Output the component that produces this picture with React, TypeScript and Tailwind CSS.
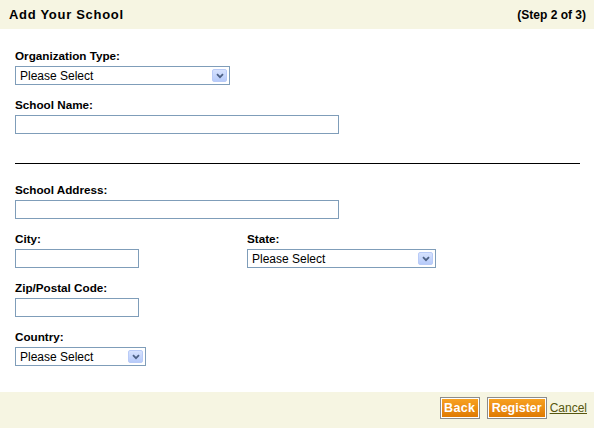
import React from "react";

function Arrow() {
  return (
    <span className="absolute right-[2px] top-[2px] bottom-[2px] w-[15px] rounded-[2px] border border-[#b9cbf7] bg-linear-to-b from-[#d6e2fe] to-[#b7cbfa] flex items-center justify-center">
      <svg width="8" height="6" viewBox="0 0 8 6">
        <path d="M1 1.2 L4 4.2 L7 1.2" fill="none" stroke="#4d6185" strokeWidth="1.8" />
      </svg>
    </span>
  );
}

function Select({ w }: { w: string }) {
  return (
    <div className={`relative h-[19px] border border-[#7f9db9] bg-white ${w}`}>
      <span className="block pl-[4px] text-[12px] leading-[18px]">Please Select</span>
      <Arrow />
    </div>
  );
}

function Input({ w }: { w: string }) {
  return <div className={`h-[19px] border border-[#7f9db9] bg-white ${w}`} />;
}

function Label({ children }: { children: React.ReactNode }) {
  return <div className="text-[11.7px] font-bold leading-[14px] mb-[3px]">{children}</div>;
}

export default function App() {
  return (
    <div className="w-[594px] h-[428px] bg-white flex flex-col font-['Liberation_Sans',Arial,sans-serif] text-black">
      <div className="h-[29px] bg-[#f6f5e2] flex items-center justify-between pl-[9px] pr-[8px]">
        <span className="text-[13px] font-bold tracking-[0.7px]">Add Your School</span>
        <span className="text-[12px] font-bold">(Step 2 of 3)</span>
      </div>
      <div className="flex-1 pl-[15px] pr-[14px] pt-[20px]">
        <Label>Organization Type:</Label>
        <Select w="w-[215px]" />
        <div className="mt-[13px]">
          <Label>School Name:</Label>
          <Input w="w-[324px]" />
        </div>
        <div className="mt-[29px] border-t border-black" />
        <div className="mt-[19px]">
          <Label>School Address:</Label>
          <Input w="w-[324px]" />
        </div>
        <div className="mt-[13px] flex">
          <div className="w-[232px]">
            <Label>City:</Label>
            <Input w="w-[124px]" />
          </div>
          <div>
            <Label>State:</Label>
            <Select w="w-[189px]" />
          </div>
        </div>
        <div className="mt-[13px]">
          <Label>Zip/Postal Code:</Label>
          <Input w="w-[124px]" />
        </div>
        <div className="mt-[13px]">
          <Label>Country:</Label>
          <Select w="w-[131px]" />
        </div>
      </div>
      <div className="h-[36px] bg-[#f6f5e2] flex items-start justify-end pt-[5px] pr-[7px]">
        <button className="w-[40px] h-[22px] border border-[#8c8c8c] shadow-[inset_0_0_0_1px_#ffffff] bg-linear-to-b from-[#f9a321] to-[#de7800] text-white text-[12.5px] font-bold leading-[18px] tracking-[0.3px]">
          Back
        </button>
        <button className="ml-[7px] w-[60px] h-[22px] border border-[#8c8c8c] shadow-[inset_0_0_0_1px_#ffffff] bg-linear-to-b from-[#f9a321] to-[#de7800] text-white text-[12.5px] font-bold leading-[18px]">
          Register
        </button>
        <a className="ml-[3px] text-[12px] leading-[22px] text-[#56560e] underline">Cancel</a>
      </div>
    </div>
  );
}
